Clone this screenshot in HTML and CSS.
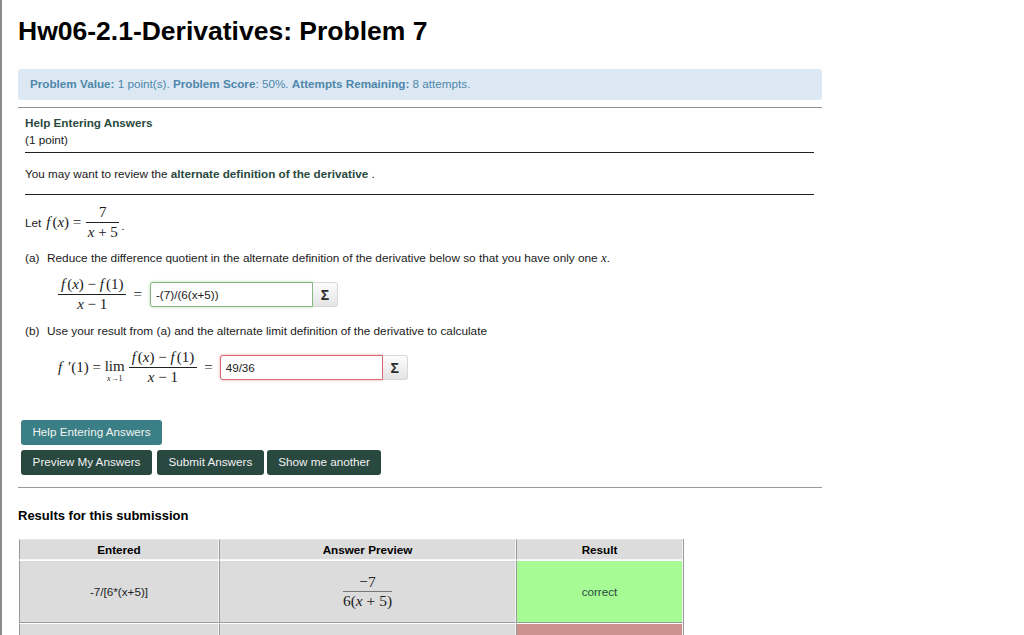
FILE: index.html
```html
<!DOCTYPE html>
<html lang="en">
<head>
<meta charset="utf-8">
<title>Hw06-2.1-Derivatives: Problem 7</title>
<link rel="stylesheet" href="styles.css">
</head>
<body>
<main class="page">
  <h1 class="title">Hw06-2.1-Derivatives: Problem 7</h1>
  <div class="alert"><b>Problem Value:</b> 1 point(s). <b>Problem Score</b>: 50%. <b>Attempts Remaining:</b> 8 attempts.</div>
  <hr class="rule">
  <section class="problem">
    <div class="head"><a class="link">Help Entering Answers</a></div>
    <div class="point">(1 point)</div>
    <hr class="dark first">
    <p class="review">You may want to review the <a class="link">alternate definition of the derivative</a> .</p>
    <hr class="dark second">
    <div class="let"><span class="letw">Let</span><span class="m"><i class="f">f</i>(<i>x</i>) =</span><span class="frac m letf"><span class="num">7</span><span class="den"><i>x</i> + 5</span></span><span class="dot">.</span></div>
    <p class="part parta"><span class="lbl">(a)</span>Reduce the difference quotient in the alternate definition of the derivative below so that you have only one <span class="m"><i>x</i></span>.</p>
    <div class="eq eqa">
      <span class="frac m wfrac"><span class="num"><i class="f">f</i>(<i>x</i>) − <i class="f">f</i>(1)</span><span class="den"><i>x</i> − 1</span></span>
      <span class="m eqs">=</span>
      <div class="field good"><span class="inp">-(7)/(6(x+5))</span><span class="sig">Σ</span></div>
    </div>
    <p class="part partb"><span class="lbl">(b)</span>Use your result from (a) and the alternate limit definition of the derivative to calculate</p>
    <div class="eq eqb">
      <span class="m fp"><i class="f">f</i> ′(1) =&nbsp;</span>
      <span class="lim m">lim<small><i>x</i>→1</small></span>
      <span class="frac m wfrac"><span class="num"><i class="f">f</i>(<i>x</i>) − <i class="f">f</i>(1)</span><span class="den"><i>x</i> − 1</span></span>
      <span class="m eqs">=</span>
      <div class="field bad"><span class="inp">49/36</span><span class="sig">Σ</span></div>
    </div>
  </section>
  <div class="btnrow help"><button class="btn teal">Help Entering Answers</button></div>
  <div class="btnrow actions">
    <button class="btn darkb wide">Preview My Answers</button>
    <button class="btn darkb">Submit Answers</button>
    <button class="btn darkb">Show me another</button>
  </div>
  <hr class="rule lower">
  <h2 class="results">Results for this submission</h2>
  <table class="tbl">
    <colgroup><col class="c1"><col class="c2"><col class="c3"></colgroup>
    <tr class="hrow"><th>Entered</th><th>Answer Preview</th><th>Result</th></tr>
    <tr class="r1"><td>-7/[6*(x+5)]</td><td><span class="frac m small"><span class="num">−7</span><span class="den">6(<i>x</i> + 5)</span></span></td><td class="ok">correct</td></tr>
    <tr class="r2"><td></td><td></td><td class="no"></td></tr>
  </table>
</main>
</body>
</html>
```
FILE: styles.css
```css
html, body { margin: 0; padding: 0; height: 635px; overflow: hidden; background: #fff; }
body { font-family: "Liberation Sans", Arial, sans-serif; font-size: 11.7px; color: #1a1a1a; }
.page { border-left: 2px solid #8c8c8c; padding-left: 16px; width: 804px; height: 635px; box-sizing: content-box; overflow: hidden; }
.title { margin: 0; padding-top: 16px; font-size: 26.5px; line-height: 30px; font-weight: 700; color: #000; }
.alert { margin-top: 23px; height: 31px; line-height: 29px; padding-left: 12px; background: #dce9f4; border-radius: 3px; color: #4f87aa; font-size: 11.7px; }
.rule { margin: 7px 0 0; border: 0; height: 1px; background: #8f8f8f; }
.problem { padding: 7px 8px 0 7px; }
.head { font-weight: 700; line-height: 15px; }
.link { color: #2a4a40; font-weight: 700; }
.point { line-height: 15px; margin-top: 2px; }
.dark { margin: 0; border: 0; height: 1px; background: #222; }
.first { margin-top: 5px; }
.review { margin: 13px 0 0; line-height: 15px; }
.second { margin-top: 13px; }
.m { font-family: "Liberation Serif", "Times New Roman", serif; font-size: 15px; }
.f { padding-right: 2px; }
.let { display: flex; align-items: center; margin-top: 9px; height: 36px; }
.letw { margin-right: 5px; }
.letf { margin-left: 5px; min-width: 33px; }
.frac { display: inline-flex; flex-direction: column; align-items: center; vertical-align: middle; }
.num { padding: 0 1px 1px; line-height: 17px; border-bottom: 1px solid #222; align-self: stretch; text-align: center; white-space: nowrap; }
.wfrac .num { padding: 0 3px 1px; }
.den { line-height: 18px; white-space: nowrap; }
.dot { align-self: center; margin: 6px 0 0 2px; }
.part { margin: 0; line-height: 15px; font-size: 11.8px; }
.parta { margin-top: 10px; }
.partb { margin-top: 11px; }
.parta .m { font-size: 13px; }
.lbl { display: inline-block; width: 22px; }
.eq { display: flex; align-items: center; height: 38px; }
.eqa { margin-top: 9px; padding-left: 33px; }
.eqb { margin-top: 9px; padding-left: 33px; }
.eqs { margin: 0 8px 0 7px; }
.eqb .eqs { margin-right: 7px; }
.fp { white-space: pre; }
.lim { display: inline-flex; flex-direction: column; align-items: center; line-height: 15px; margin-right: 4px; margin-top: 8px; }
.lim small { font-size: 8px; line-height: 9px; }
.field { display: flex; height: 25px; box-sizing: border-box; }
.inp { box-sizing: border-box; width: 163px; height: 25px; line-height: 23px; padding-left: 5px; background: #fff; border: 1px solid; border-radius: 3px 0 0 3px; color: #222; }
.good .inp { border-color: #86b783; box-shadow: 0 0 3px #a9d3a4; }
.bad .inp { border-color: #d5696e; box-shadow: 0 0 3px #e6a3a6; }
.sig { width: 25px; height: 25px; line-height: 24px; box-sizing: border-box; text-align: center; font-family: "Liberation Sans", sans-serif; font-weight: 700; font-size: 14px; color: #2b2b2b; background: linear-gradient(#fcfcfc, #e4e4e4); border: 1px solid #d8d8d8; border-left: 0; border-radius: 0 3px 3px 0; }
.btnrow { display: flex; gap: 3px; padding-left: 3px; }
.help { margin-top: 34px; }
.actions { margin-top: 5px; }
.btn { height: 25px; padding: 0 11.5px 2px; border: 0; border-radius: 3px; color: #f2f2f2; font-family: "Liberation Sans", sans-serif; font-size: 11.7px; }
.teal { background: #3a7f85; width: 141px; padding: 0 0 2px; }
.darkb { background: #284840; }
.wide { width: 131px; margin-right: 2px; padding: 0 0 2px; }
.lower { margin-top: 12px; background: #999; }
.results { margin: 20px 0 0; font-size: 13px; line-height: 15px; font-weight: 700; color: #000; }
.tbl { margin-top: 16px; margin-left: 1px; border-collapse: separate; border-spacing: 0; table-layout: fixed; width: 665px; background: #dcdcdc; border-right: 1px solid #999; }
.c1 { width: 200px; } .c2 { width: 297px; } .c3 { width: 167px; }
.tbl th, .tbl td { padding: 0; text-align: center; border-left: 1px solid #999; border-right: 1px solid #f4f4f4; border-top: 1px solid #fff; border-bottom: 1px solid #999; }
.tbl th { height: 19px; font-size: 11.7px; color: #000; border-bottom-color: #f4f4f4; }
.tbl td { height: 61px; color: #222; }
.hrow th { border-top: 1px solid #e6e6e6; }
.small { font-size: 15.5px; }
.small .num { border-bottom-color: #777; }
.ok { background: #a6fb94; color: #2a4a40 !important; }
.no { background: #cc908e; }
```
